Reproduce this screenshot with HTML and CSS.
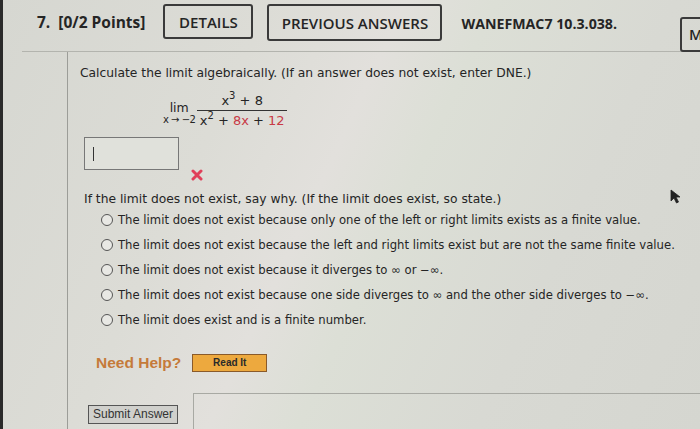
FILE: index.html
```html
<!DOCTYPE html>
<html>
<head>
<meta charset="utf-8">
<link rel="stylesheet" href="styles.css">
</head>
<body>
<div class="page">
  <div class="header">
    <span class="qnum">7.&nbsp; [0/2 Points]</span>
    <span class="btn btn-details">DETAILS</span>
    <span class="btn btn-prev">PREVIOUS ANSWERS</span>
    <span class="code">WANEFMAC7 10.3.038.</span>
    <span class="btn btn-m">M</span>
  </div>
  <div class="main">
    <div class="gutter"></div>
    <div class="content">
      <p class="prompt">Calculate the limit algebraically. (If an answer does not exist, enter DNE.)</p>
      <div class="limit">
        <div class="lim">
          <span class="lim-word">lim</span>
          <span class="lim-sub">x &rarr; &minus;2</span>
        </div>
        <div class="frac">
          <span class="num">x<sup>3</sup> + 8</span>
          <span class="den">x<sup>2</sup> + <span class="red">8x</span> + <span class="red">12</span></span>
        </div>
      </div>
      <div class="answer-row">
        <div class="input"><span class="caret"></span></div>
        <svg class="wrong" width="12" height="12" viewBox="0 0 12 12"><path d="M2 2 L10 10 M10 2 L2 10" stroke="#e0405a" stroke-width="3" stroke-linecap="round"/></svg>
      </div>
      <p class="prompt why">If the limit does not exist, say why. (If the limit does exist, so state.)</p>
      <ul class="options">
        <li><span class="radio"></span>The limit does not exist because only one of the left or right limits exists as a finite value.</li>
        <li><span class="radio"></span>The limit does not exist because the left and right limits exist but are not the same finite value.</li>
        <li><span class="radio"></span>The limit does not exist because it diverges to &infin; or &minus;&infin;.</li>
        <li><span class="radio"></span>The limit does not exist because one side diverges to &infin; and the other side diverges to &minus;&infin;.</li>
        <li><span class="radio"></span>The limit does exist and is a finite number.</li>
      </ul>
      <div class="help">
        <span class="need">Need Help?</span>
        <span class="readit">Read It</span>
      </div>
      <div class="submit-row">
        <span class="submit">Submit Answer</span>
        <div class="notes"></div>
      </div>
    </div>
  </div>
  <svg class="cursor" width="12" height="16" viewBox="0 0 12 16"><path d="M1 1 L1 12 L4 9 L6.5 14 L8.5 13 L6 8 L10 8 Z" fill="#222" stroke="#222" stroke-width="0.8"/></svg>
</div>
</body>
</html>
```
FILE: styles.css
```css
html, body {
  margin: 0;
  padding: 0;
}
body {
  width: 700px;
  height: 429px;
  overflow: hidden;
  background: #d7d8d2;
  color: #252525;
}
.page {
  position: relative;
  width: 700px;
  height: 429px;
  background: linear-gradient(115deg, #d6d7d1 0%, #dcdcd6 30%, #e2e0dc 45%, #dcdfd6 55%, #d8d9d3 75%, #d5d6d0 100%);
  border-left: 3px solid #2a2a2a;
  box-sizing: border-box;
}
.header {
  display: flex;
  align-items: center;
  height: 51px;
  margin-left: 19px;
  padding-left: 15px;
  border-bottom: 1px solid #b3b4ae;
  font-family: "Open Sans", sans-serif;
  font-weight: 600;
  color: #252525;
}
.qnum {
  font-size: 15.5px;
  font-weight: 700;
  margin-right: 18px;
  margin-top: -8px;
}
.btn {
  border: 2px solid #3a3a3a;
  border-radius: 3px;
  font-size: 15px;
  font-weight: 600;
  display: flex;
  align-items: center;
  justify-content: center;
  box-sizing: border-box;
}
.btn-details {
  width: 90px;
  height: 35px;
  margin-top: -8px;
}
.btn-prev {
  width: 175px;
  height: 37px;
  margin-left: 14px;
  margin-top: -6px;
}
.code {
  font-size: 14.2px;
  font-weight: 700;
  margin-left: 19px;
  margin-top: -4px;
}
.btn-m {
  width: 30px;
  height: 35px;
  margin-left: auto;
  margin-right: -10px;
  margin-top: 17px;
  justify-content: flex-start;
  padding-left: 7px;
}
.main {
  display: flex;
  height: 377px;
}
.gutter {
  width: 64px;
  border-right: 1px solid #9c9d98;
  flex: none;
}
.content {
  flex: 1;
  padding-left: 12px;
  font-family: "DejaVu Sans", Verdana, sans-serif;
  font-size: 11px;
}
.prompt {
  margin: 14px 0 0 0;
  font-size: 12.3px;
}
.limit {
  display: flex;
  align-items: center;
  margin: 13px 0 0 83px;
  font-size: 13px;
}
.lim {
  display: flex;
  flex-direction: column;
  align-items: center;
  margin-top: 5px;
}
.lim-word {
  font-size: 12.5px;
  line-height: 13px;
}
.lim-sub {
  font-size: 10px;
  line-height: 12px;
  letter-spacing: -0.5px;
}
.frac {
  display: flex;
  flex-direction: column;
  align-items: center;
  margin-left: 2px;
}
.num {
  padding: 0 24px 1px;
  border-bottom: 1px solid #333;
  line-height: 16px;
}
.den {
  line-height: 17px;
  padding-top: 1px;
}
sup {
  font-size: 10px;
  vertical-align: 6px;
  line-height: 0;
}
.red {
  color: #c83a46;
}
.answer-row {
  display: flex;
  align-items: flex-end;
  margin: 8px 0 0 4px;
}
.input {
  width: 95px;
  height: 33px;
  border: 1px solid #777;
  box-sizing: border-box;
  position: relative;
  background: #e0e1db;
  display: flex;
  align-items: center;
  padding-left: 8px;
}
.caret {
  width: 1px;
  height: 14px;
  background: #333;
}
.wrong {
  margin-left: 12px;
  margin-bottom: -11px;
}
.why {
  margin-top: 22px;
  margin-left: 4px;
}
.options {
  list-style: none;
  margin: 1px 0 0 0;
  padding: 0 0 0 21px;
}
.options li {
  display: flex;
  align-items: center;
  height: 25.2px;
  font-size: 11.65px;
}
.radio {
  width: 10px;
  height: 10px;
  border: 1px solid #555;
  border-radius: 50%;
  margin-right: 5px;
  background: #e8e8e4;
  flex: none;
}
.help {
  display: flex;
  align-items: center;
  margin: 21px 0 0 16px;
}
.need {
  font-family: "Liberation Sans", Arial, sans-serif;
  font-weight: 700;
  font-size: 15.5px;
  color: #c57a3a;
}
.readit {
  margin-left: 11px;
  width: 75px;
  height: 18px;
  box-sizing: border-box;
  border: 1px solid #8a5a2a;
  background: #eda93e;
  font-family: "Liberation Sans", Arial, sans-serif;
  font-weight: 700;
  font-size: 10px;
  color: #2a2a2a;
  display: flex;
  align-items: center;
  justify-content: center;
}
.submit-row {
  display: flex;
  align-items: flex-end;
  margin-top: 21px;
  margin-left: 8px;
}
.submit {
  width: 90px;
  height: 19px;
  box-sizing: border-box;
  border: 1px solid #555;
  background: #d0d0cc;
  font-family: "Liberation Sans", Arial, sans-serif;
  font-size: 12px;
  color: #333;
  display: flex;
  align-items: center;
  justify-content: center;
  margin-bottom: 7px;
}
.notes {
  flex: 1;
  height: 37px;
  margin-left: 15px;
  border-top: 1px solid #a8a9a3;
  border-left: 1px solid #a8a9a3;
}
.cursor {
  position: absolute;
  left: 667px;
  top: 189px;
}
```
